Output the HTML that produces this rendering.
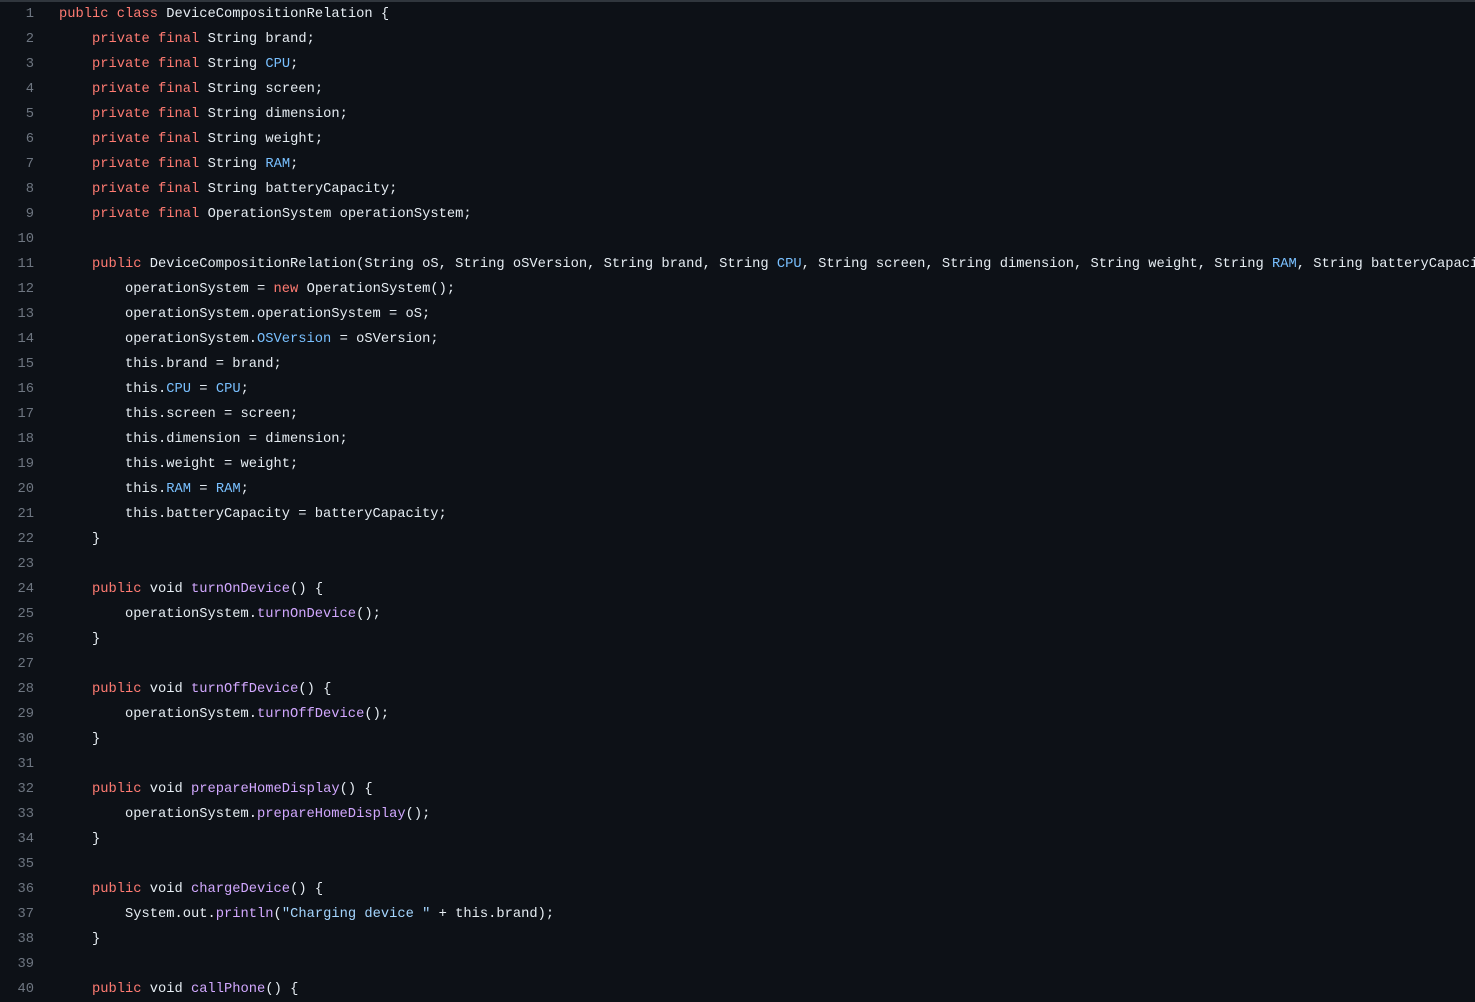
<!DOCTYPE html>
<html><head><meta charset="utf-8"><style>
html,body{margin:0;padding:0;background:#0d1117;width:1475px;height:990px;overflow:hidden}
.top{height:2px;background:#30363d}
.ln,.c{position:absolute;top:2px;font-family:"Liberation Mono",monospace;font-size:13.75px;line-height:25px;color:#e6edf3;white-space:pre;margin:0}
.ln{left:0;width:34px;text-align:right;color:#6e7681}
.c{left:59px}
.k{color:#ff7b72}.v{color:#79c0ff}.f{color:#d2a8ff}.s{color:#a5d6ff}
</style></head><body><div class="top"></div><div class="ln">1
2
3
4
5
6
7
8
9
10
11
12
13
14
15
16
17
18
19
20
21
22
23
24
25
26
27
28
29
30
31
32
33
34
35
36
37
38
39
40</div><div class="c"><span class="k">public</span> <span class="k">class</span> DeviceCompositionRelation {
    <span class="k">private</span> <span class="k">final</span> String brand;
    <span class="k">private</span> <span class="k">final</span> String <span class="v">CPU</span>;
    <span class="k">private</span> <span class="k">final</span> String screen;
    <span class="k">private</span> <span class="k">final</span> String dimension;
    <span class="k">private</span> <span class="k">final</span> String weight;
    <span class="k">private</span> <span class="k">final</span> String <span class="v">RAM</span>;
    <span class="k">private</span> <span class="k">final</span> String batteryCapacity;
    <span class="k">private</span> <span class="k">final</span> OperationSystem operationSystem;

    <span class="k">public</span> DeviceCompositionRelation(String oS, String oSVersion, String brand, String <span class="v">CPU</span>, String screen, String dimension, String weight, String <span class="v">RAM</span>, String batteryCapacity) {
        operationSystem = <span class="k">new</span> OperationSystem();
        operationSystem.operationSystem = oS;
        operationSystem.<span class="v">OSVersion</span> = oSVersion;
        this.brand = brand;
        this.<span class="v">CPU</span> = <span class="v">CPU</span>;
        this.screen = screen;
        this.dimension = dimension;
        this.weight = weight;
        this.<span class="v">RAM</span> = <span class="v">RAM</span>;
        this.batteryCapacity = batteryCapacity;
    }

    <span class="k">public</span> void <span class="f">turnOnDevice</span>() {
        operationSystem.<span class="f">turnOnDevice</span>();
    }

    <span class="k">public</span> void <span class="f">turnOffDevice</span>() {
        operationSystem.<span class="f">turnOffDevice</span>();
    }

    <span class="k">public</span> void <span class="f">prepareHomeDisplay</span>() {
        operationSystem.<span class="f">prepareHomeDisplay</span>();
    }

    <span class="k">public</span> void <span class="f">chargeDevice</span>() {
        System.out.<span class="f">println</span>(<span class="s">"Charging device "</span> + this.brand);
    }

    <span class="k">public</span> void <span class="f">callPhone</span>() {</div></body></html>
